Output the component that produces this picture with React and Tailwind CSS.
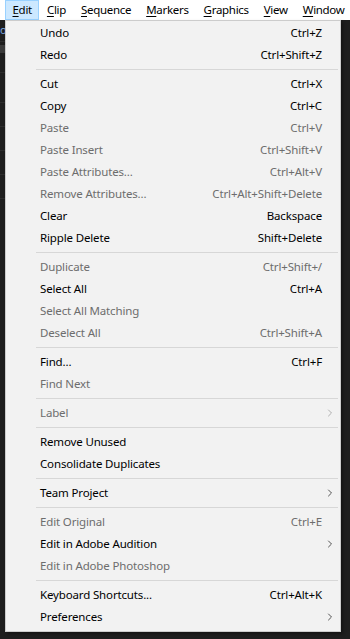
import { ChevronRight } from "lucide-react";

const menuBar = ["Edit", "Clip", "Sequence", "Markers", "Graphics", "View", "Window"];

// null = separator
const items = [
  { label: "Undo", keys: "Ctrl+Z" },
  { label: "Redo", keys: "Ctrl+Shift+Z" },
  null,
  { label: "Cut", keys: "Ctrl+X" },
  { label: "Copy", keys: "Ctrl+C" },
  { label: "Paste", keys: "Ctrl+V", off: true },
  { label: "Paste Insert", keys: "Ctrl+Shift+V", off: true },
  { label: "Paste Attributes...", keys: "Ctrl+Alt+V", off: true },
  { label: "Remove Attributes...", keys: "Ctrl+Alt+Shift+Delete", off: true },
  { label: "Clear", keys: "Backspace" },
  { label: "Ripple Delete", keys: "Shift+Delete" },
  null,
  { label: "Duplicate", keys: "Ctrl+Shift+/", off: true },
  { label: "Select All", keys: "Ctrl+A" },
  { label: "Select All Matching", off: true },
  { label: "Deselect All", keys: "Ctrl+Shift+A", off: true },
  null,
  { label: "Find...", keys: "Ctrl+F" },
  { label: "Find Next", off: true },
  null,
  { label: "Label", sub: true, off: true },
  null,
  { label: "Remove Unused" },
  { label: "Consolidate Duplicates" },
  null,
  { label: "Team Project", sub: true },
  null,
  { label: "Edit Original", keys: "Ctrl+E", off: true },
  { label: "Edit in Adobe Audition", sub: true },
  { label: "Edit in Adobe Photoshop", off: true },
  null,
  { label: "Keyboard Shortcuts...", keys: "Ctrl+Alt+K" },
  { label: "Preferences", sub: true },
];

const MenuRow = ({ item }) => {
  if (!item) {
    return <div className="h-px bg-[#d7d7d7] ml-[30px] mr-[2px] my-[3px]" />;
  }
  const color = item.off ? "text-[#6d6d6d]" : "text-black";
  return (
    <div className={`h-[22px] flex items-center pl-[34px] ${color}`}>
      <span className="flex-1 whitespace-nowrap">{item.label}</span>
      {item.keys && <span className="whitespace-nowrap">{item.keys}</span>}
      <span className="w-[18px] h-full flex items-center pl-[2px]">
        {item.sub && (
          <ChevronRight
            size={12}
            strokeWidth={2}
            className={item.off ? "text-[#b0b0b0]" : "text-[#555555]"}
          />
        )}
      </span>
    </div>
  );
};

export default function App() {
  return (
    <div
      className="w-[350px] h-[639px] bg-[#1e1e1e] overflow-hidden text-[11.5px] tracking-[-0.15px] leading-none"
      style={{ fontFamily: '"Noto Sans", "Open Sans", sans-serif' }}
    >
      {/* menu bar */}
      <div className="h-[20px] bg-white flex items-stretch pl-[5px] whitespace-nowrap tracking-[-0.3px]">
        {menuBar.map((name, i) => (
          <div
            key={name}
            className={`flex items-center px-[6.5px] border ${
              i === 0 ? "bg-[#cce8ff] border-[#99d1ff]" : "border-transparent"
            } text-black`}
          >
            <span className="underline underline-offset-2">{name[0]}</span>
            <span>{name.slice(1)}</span>
          </div>
        ))}
      </div>

      {/* workspace + open menu */}
      <div className="flex h-[619px]">
        <div className="w-[5px] flex flex-col">
          <div className="h-[4px]" />
          <div className="h-[18px] border-b border-[#2c2c2c] text-[#7aa7e0] text-[11px]">o</div>
          <div className="h-[8px] bg-[#3a3a3a] mt-[3px]" />
          <div className="h-[20px] border-b border-[#2c2c2c]" />
          <div className="h-[30px] border-b border-[#2c2c2c]" />
          <div className="h-[24px] border-b border-[#2c2c2c]" />
          <div className="h-[24px] border-b border-[#2c2c2c]" />
          <div className="h-[24px] border-b border-[#2c2c2c]" />
          <div className="h-[24px] border-b border-[#2c2c2c]" />
        </div>
        <div className="w-[336px] h-[612px] pt-px bg-[#f2f2f2] border border-[#cccccc] shadow-[2px_2px_3px_rgba(0,0,0,0.35)]">
          {items.map((item, i) => (
            <MenuRow key={i} item={item} />
          ))}
        </div>
        <div className="flex-1" />
      </div>
    </div>
  );
}
